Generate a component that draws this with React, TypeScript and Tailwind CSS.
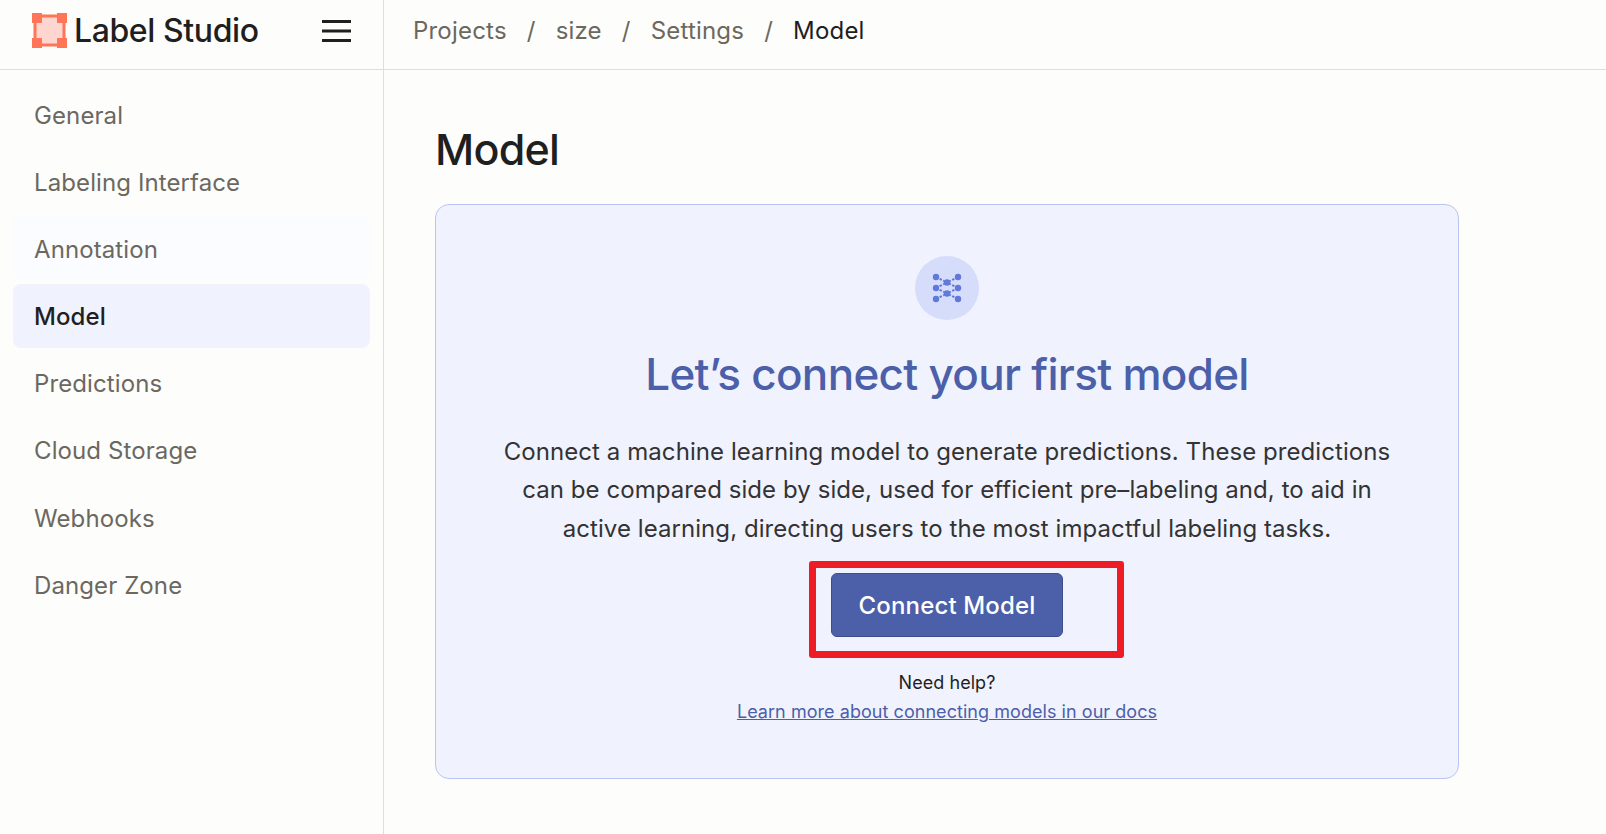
import React from "react";

const navItems = ["General", "Labeling Interface", "Annotation", "Model", "Predictions", "Cloud Storage", "Webhooks", "Danger Zone"];
const crumbs = ["Projects", "size", "Settings"];

function Logo() {
  return (
    <svg width="35" height="35" viewBox="0 0 35 35" className="shrink-0">
      <rect x="3" y="3" width="29" height="29" fill="#ffd6cf" stroke="#ff7557" strokeWidth="3" />
      <rect x="0" y="0" width="10" height="10" fill="#ff7557" />
      <rect x="25" y="0" width="10" height="10" fill="#ff7557" />
      <rect x="0" y="25" width="10" height="10" fill="#ff7557" />
      <rect x="25" y="25" width="10" height="10" fill="#ff7557" />
    </svg>
  );
}

function Burger() {
  return (
    <svg width="29" height="22" viewBox="0 0 29 22" fill="#1f1f1f" className="ml-auto shrink-0">
      <rect x="0" y="0" width="29" height="3" />
      <rect x="0" y="9.5" width="29" height="3" />
      <rect x="0" y="19" width="29" height="3" />
    </svg>
  );
}

function ModelIcon() {
  const outer = [[4, 4], [4, 15], [4, 26], [26, 4], [26, 15], [26, 26]];
  const inner = [[15, 9.5], [15, 20.5]];
  const links = [[4, 4, 15, 9.5], [4, 15, 15, 9.5], [4, 15, 15, 20.5], [4, 26, 15, 20.5], [26, 4, 15, 9.5], [26, 15, 15, 9.5], [26, 15, 15, 20.5], [26, 26, 15, 20.5]];
  return (
    <svg width="30" height="30" viewBox="0 0 30 30" fill="#617ada">
      {links.map(([x1, y1, x2, y2], i) => (
        <line key={i} x1={x1} y1={y1} x2={x2} y2={y2} stroke="#617ada" strokeWidth="2" strokeDasharray="2.5 1.5" />
      ))}
      {outer.map(([cx, cy], i) => <circle key={i} cx={cx} cy={cy} r="3.2" />)}
      {inner.map(([cx, cy], i) => <circle key={i} cx={cx} cy={cy} r="3.2" />)}
    </svg>
  );
}

export default function App() {
  return (
    <div className="h-[834px] overflow-hidden bg-[#fdfdfc] font-['Inter','Liberation_Sans',sans-serif] text-[#1f1f1f]">
      <header className="flex h-[70px] border-b border-[#e1ded5]">
        <div className="flex w-[384px] shrink-0 items-center border-r border-[#e1ded5] pb-[8px] pl-[32px] pr-[32px]">
          <Logo />
          <span className="ml-[7px] text-[32px] font-medium tracking-[-0.4px]">Label Studio</span>
          <Burger />
        </div>
        <nav className="flex items-center gap-[20px] pb-[8px] pl-[29px] text-[24px] tracking-[0.2px] text-[#6b6860]">
          {crumbs.map((c) => (
            <React.Fragment key={c}>
              <span>{c}</span>
              <span>/</span>
            </React.Fragment>
          ))}
          <span className="text-[#1f1f1f]">Model</span>
        </nav>
      </header>
      <div className="flex h-[764px]">
        <aside className="flex w-[384px] shrink-0 flex-col gap-[3.2px] border-r border-[#e1ded5] pl-[13px] pr-[13px] pt-[12px]">
          {navItems.map((item) => (
            <div
              key={item}
              className={
                "flex h-[64px] items-center rounded-[8px] pl-[21px] pt-[3px] text-[24px] tracking-[0.1px] " +
                (item === "Model" ? "bg-[#f0f2fe] font-medium text-[#1f1f1f]" : item === "Annotation" ? "bg-[#fbfcff] text-[#6b6860]" : "text-[#6b6860]")
              }
            >
              {item}
            </div>
          ))}
        </aside>
        <main className="flex-1 pl-[51px] pt-[51px]">
          <h1 className="text-[43px] font-medium leading-[56px] tracking-[-0.75px]">Model</h1>
          <section className="mt-[27px] flex h-[575px] w-[1024px] flex-col items-center rounded-[14px] border border-[#b9c4f5] bg-[#f0f2fe] pt-[51px]">
            <div className="flex h-[64px] w-[64px] items-center justify-center rounded-full bg-[#d6ddfb]">
              <ModelIcon />
            </div>
            <h2 className="mt-[27px] text-[44px] font-medium leading-[54px] tracking-[-0.7px] text-[#4c5fa9]">Let’s connect your first model</h2>
            <p className="mt-[32px] w-[900px] text-center text-[24px] leading-[38.4px] tracking-[0.07px] text-[#333333]">
              Connect a machine learning model to generate predictions. These predictions can be compared side by side, used for efficient pre–labeling and, to aid in active learning, directing users to the most impactful labeling tasks.
            </p>
            <div className="relative mt-[25px]">
              <button className="h-[64px] w-[232px] rounded-[6px] border border-[#3d4d8c] bg-[#4c5fa9] pt-[1px] text-[24px] font-medium tracking-[0.15px] text-white">Connect Model</button>
              <div className="absolute left-[-22px] top-[-12px] h-[97px] w-[315px] rounded-[3px] border-[7px] border-[#ee1c25]" />
            </div>
            <div className="mt-[31px] text-[18px] leading-[29px] tracking-[0.05px] text-[#1f1f1f]">Need help?</div>
            <a className="text-[18px] leading-[29px] tracking-[0.05px] text-[#4c5fa9] underline">Learn more about connecting models in our docs</a>
          </section>
        </main>
      </div>
    </div>
  );
}
